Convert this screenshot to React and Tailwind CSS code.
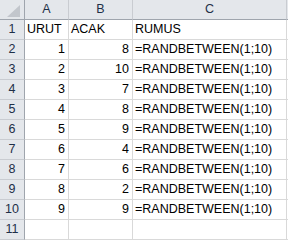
import React from "react";

const rows = [
  ["URUT", "ACAK", "RUMUS"],
  [1, 8, "=RANDBETWEEN(1;10)"],
  [2, 10, "=RANDBETWEEN(1;10)"],
  [3, 7, "=RANDBETWEEN(1;10)"],
  [4, 8, "=RANDBETWEEN(1;10)"],
  [5, 9, "=RANDBETWEEN(1;10)"],
  [6, 4, "=RANDBETWEEN(1;10)"],
  [7, 6, "=RANDBETWEEN(1;10)"],
  [8, 2, "=RANDBETWEEN(1;10)"],
  [9, 9, "=RANDBETWEEN(1;10)"],
  ["", "", ""],
];

function Cell({ value }) {
  const isNum = typeof value === "number";
  return (
    <div
      className={`h-5 border-r border-b border-[#d9d9d9] flex items-center overflow-hidden whitespace-nowrap ${
        isNum ? "justify-end pr-[3px]" : "justify-start pl-[2px]"
      }`}
    >
      {value}
    </div>
  );
}

export default function App() {
  return (
    <div
      className="w-[288px] h-[240px] bg-white overflow-hidden text-[12.5px] text-black"
      style={{ fontFamily: '"Liberation Sans", Arial, sans-serif' }}
    >
      <div className="grid grid-cols-[25px_44px_64px_154px_1fr]">
        {/* header row */}
        <div className="h-5 bg-[#e4e7eb] border-r border-b border-[#9fa5ad] relative">
          <svg className="absolute left-[7px] top-[5px]" width="14" height="12" viewBox="0 0 14 12">
            <polygon points="13,0 13,12 0,12" fill="#c2c6cc" />
          </svg>
        </div>
        {["A", "B", "C"].map((c) => (
          <div
            key={c}
            className="h-5 bg-[#e4e7eb] border-r border-b border-r-[#c9ccd1] border-b-[#9fa5ad] flex items-center justify-center text-[#1e2f48]"
          >
            {c}
          </div>
        ))}
        <div className="h-5 bg-[#e4e7eb] border-b border-[#9fa5ad]" />

        {rows.map((r, i) => (
          <React.Fragment key={i}>
            <div className="h-5 bg-[#e4e7eb] border-r border-b border-r-[#9fa5ad] border-b-[#c9ccd1] flex items-center justify-center text-[#1e2f48]">
              {i + 1}
            </div>
            <Cell value={r[0]} />
            <Cell value={r[1]} />
            <Cell value={r[2]} />
            <div className="h-5 border-b border-[#d9d9d9]" />
          </React.Fragment>
        ))}
      </div>
    </div>
  );
}
